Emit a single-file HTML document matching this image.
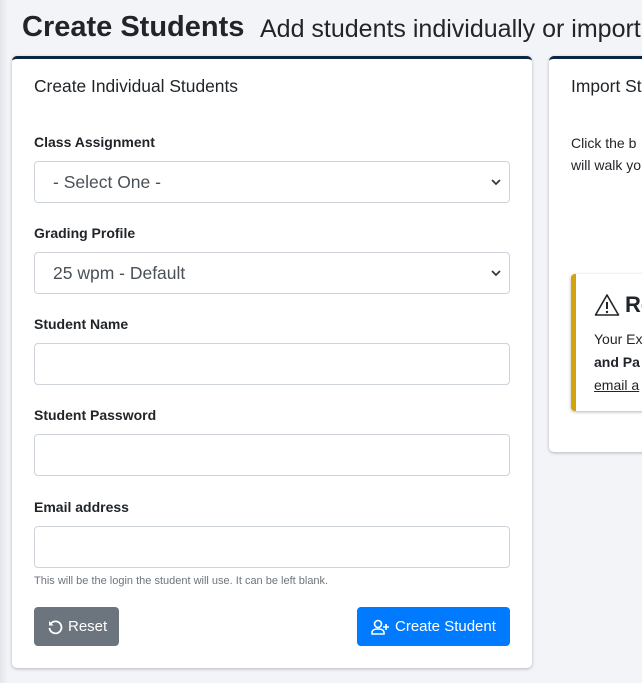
<!DOCTYPE html>
<html><head><meta charset="utf-8"><style>
*{box-sizing:border-box;margin:0;padding:0}
body{width:642px;height:683px;overflow:hidden;background:#f3f4f8;font-family:"Liberation Sans",sans-serif;color:#212529;position:relative}
.a{position:absolute;white-space:nowrap}
.card{position:absolute;background:#fff;border-top:3px solid #0b2545;border-radius:5px;box-shadow:0 1px 3px rgba(0,0,0,.25)}
.lbl{position:absolute;left:34px;font-weight:bold;font-size:14px}
.inp{position:absolute;left:34px;width:476px;height:42px;border:1px solid #ced4da;border-radius:4px;background:#fff;font-size:17.5px;color:#495057;padding:10px 18px}
.chev{position:absolute;right:8px;top:15px}
</style></head><body>
<div class="a" style="left:0;top:0;width:8px;height:683px;background:linear-gradient(90deg,#e4e5e8,#f3f4f8)"></div>
<div class="a" style="left:22px;top:11px;font-size:29px;font-weight:bold">Create Students</div>
<div class="a" style="left:260px;top:15px;font-size:25px">Add students individually or import</div>

<div class="card" style="left:12px;top:56px;width:520px;height:612px"></div>
<div class="a" style="left:34px;top:76px;font-size:17.4px">Create Individual Students</div>

<div class="lbl" style="top:134px">Class Assignment</div>
<div class="inp" style="top:161px">- Select One -<svg class="chev" width="10" height="10" viewBox="0 0 10 10"><path d="M1 3l4 4 4-4" fill="none" stroke="#343a40" stroke-width="1.8"/></svg></div>
<div class="lbl" style="top:225px">Grading Profile</div>
<div class="inp" style="top:252px">25 wpm - Default<svg class="chev" width="10" height="10" viewBox="0 0 10 10"><path d="M1 3l4 4 4-4" fill="none" stroke="#343a40" stroke-width="1.8"/></svg></div>
<div class="lbl" style="top:316px">Student Name</div>
<div class="inp" style="top:343px"></div>
<div class="lbl" style="top:407px">Student Password</div>
<div class="inp" style="top:434px"></div>
<div class="lbl" style="top:499px">Email address</div>
<div class="inp" style="top:526px"></div>
<div class="a" style="left:34px;top:575px;font-size:11px;color:#6c757d">This will be the login the student will use. It can be left blank.</div>

<div class="a" style="left:34px;top:607px;width:85px;height:39px;background:#6c757d;border-radius:4px;color:#fff;font-size:15px;line-height:40px;padding-left:34px">Reset</div>
<svg class="a" style="left:47px;top:619px" width="16" height="16" viewBox="0 0 16 16"><path d="M3.5 5A6 6 0 1 1 2.5 9" fill="none" stroke="#fff" stroke-width="1.8"/><path d="M2 2v4.5h4.5z" fill="#fff"/></svg>
<div class="a" style="left:357px;top:607px;width:153px;height:39px;background:#007bff;border-radius:4px;color:#fff;font-size:15px;line-height:40px;padding-left:38px">Create Student</div>
<svg class="a" style="left:371px;top:619px" width="20" height="16" viewBox="0 0 20 16"><circle cx="7" cy="5" r="3.5" fill="none" stroke="#fff" stroke-width="1.6"/><path d="M1 15v-1.5c0-2 2-3.5 6-3.5s6 1.5 6 3.5V15z" fill="none" stroke="#fff" stroke-width="1.6"/><path d="M15 5v6M12 8h6" stroke="#fff" stroke-width="1.6"/></svg>

<div class="card" style="left:549px;top:56px;width:110px;height:396px"></div>
<div class="a" style="left:571px;top:76px;font-size:17.4px">Import St</div>
<div class="a" style="left:571px;top:132px;font-size:14px;line-height:22px">Click the b<br>will walk yo</div>
<div class="a" style="left:571px;top:274px;width:80px;height:137px;background:#fff;border-left:5px solid #d4a30c;border-radius:4px;box-shadow:0 1px 3px rgba(0,0,0,.3)"></div>
<svg class="a" style="left:594px;top:293px" width="26" height="24" viewBox="0 0 26 24"><path d="M13 2L1.5 22h23z" fill="none" stroke="#212529" stroke-width="1.6" stroke-linejoin="round"/><path d="M13 9v7" stroke="#212529" stroke-width="2"/><circle cx="13" cy="19" r="1.2" fill="#212529"/></svg>
<div class="a" style="left:625px;top:292px;font-size:22px;font-weight:bold">Re</div>
<div class="a" style="left:594px;top:328px;font-size:14px;line-height:23px">Your Ex<br><b>and Pa</b><br><u>email a</u></div>
</body></html>
